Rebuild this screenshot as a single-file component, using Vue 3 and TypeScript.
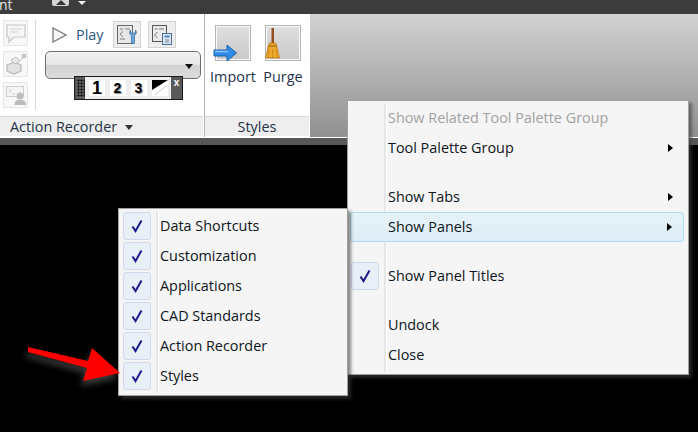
<script setup lang="ts">
type MenuRow = { label?: string; gap?: boolean; disabled?: boolean; more?: boolean; active?: boolean; checked?: boolean }

const panelMenu: MenuRow[] = [
  { label: 'Show Related Tool Palette Group', disabled: true },
  { label: 'Tool Palette Group', more: true },
  { gap: true },
  { label: 'Show Tabs', more: true },
  { label: 'Show Panels', more: true, active: true },
  { gap: true },
  { label: 'Show Panel Titles', checked: true },
  { gap: true },
  { label: 'Undock' },
  { label: 'Close' }
]

const subMenu: string[] = ['Data Shortcuts', 'Customization', 'Applications', 'CAD Standards', 'Action Recorder', 'Styles']
</script>

<template>
  <div class="screen">
    <div class="topbar">
      <span class="topbar-text">nt</span>
      <span class="topbar-btn"><i class="up"></i></span>
      <i class="topbar-caret"></i>
    </div>

    <div class="ribbon">
      <section class="panel action-panel">
        <div class="panel-body action-body">
          <div class="side-icons">
            <button class="tool">
              <svg width="22" height="22" viewBox="0 0 22 22"><path d="M2 3h18v12H9l-5 5v-5H2z" fill="#f6f6f6" stroke="#c6c6c6" stroke-width="1.200"/><path d="M5 7h12M5 10h8" stroke="#d2d2d2" stroke-width="1.200"/></svg>
            </button>
            <button class="tool">
              <svg width="22" height="22" viewBox="0 0 22 22"><path d="M2 12l8-3 6 3v6l-7 3-7-3z" fill="#e2e2e2" stroke="#b8b8b8" stroke-width="1.200"/><path d="M6 7l5-3 4 4-5 3z" fill="#e8e8e8" stroke="#bdbdbd"/><path d="M15 7l4-3" stroke="#c4c4c4"/><rect x="17.500" y="1.500" width="3" height="3" fill="#cfcfcf" stroke="#bdbdbd"/></svg>
            </button>
            <button class="tool">
              <svg width="22" height="22" viewBox="0 0 22 22"><rect x="1.500" y="2.500" width="17" height="10" fill="#f5f5f5" stroke="#cecece"/><path d="M4 5.500l2 1.500-2 1.500M7 10h3" stroke="#cfcfcf" fill="none"/><circle cx="15" cy="12" r="3.500" fill="#bcbcbc"/><path d="M9.500 21c0-4 1.500-5 5.500-5s6 1 6 5z" fill="#bcbcbc"/></svg>
            </button>
          </div>
          <div class="recorder">
            <div class="recorder-top">
              <svg class="play" width="16" height="16" viewBox="0 0 16 16"><path d="M2 1v14l13-7z" fill="#f7f7f7" stroke="#77797b" stroke-width="1.300"/></svg>
              <span class="play-text">Play</span>
              <button class="tool framed">
                <svg width="22" height="22" viewBox="0 0 22 22"><rect x="1.500" y="1.500" width="15" height="18" fill="#e4e6e8" stroke="#6a6a6a"/><path d="M4 5h3M9 5h5M4 10l3-2.500M4 10l3 3M4 15h5" stroke="#808080" fill="none"/><path d="M14.500 6c-1.500 2-1 4.500 1 5.500v8h3v-8c2-1 2.500-3.500 1-5.500v3h-5z" fill="#6ea6d8" stroke="#33689c" stroke-width=".7"/></svg>
              </button>
              <button class="tool framed">
                <svg width="22" height="22" viewBox="0 0 22 22"><rect x="1.500" y="1.500" width="14" height="16" fill="#e8eaec" stroke="#555"/><path d="M3.500 5h3M8 5h5M3.500 11l3-3M3.500 11l3 3" stroke="#777" fill="none"/><rect x="11.500" y="9.500" width="9" height="11" fill="#dbe6f1" stroke="#496f96"/><path d="M13.500 12.500h5" stroke="#4a86c2" stroke-width="2"/><path d="M14 16h4M14 18h4" stroke="#7a8896"/></svg>
              </button>
            </div>
            <div class="combo"><i class="combo-caret"></i></div>
          </div>
        </div>
        <footer class="panel-foot action-foot">Action Recorder <i class="foot-caret"></i></footer>
      </section>

      <section class="panel styles-panel">
        <div class="panel-body styles-body">
          <div class="big-tool">
            <span class="big-box">
              <svg class="import-arrow" width="25" height="18" viewBox="0 0 25 18"><path d="M1 6h13V1l9.500 8L14 17v-5H1z" fill="#2f8be6" stroke="#1762ac"/><path d="M2 7.500h13" stroke="#8cc8fb" stroke-width="1.500"/></svg>
            </span>
            <span>Import</span>
          </div>
          <div class="big-tool">
            <span class="big-box">
              <svg class="broom" width="15" height="31" viewBox="0 0 15 31"><path d="M6.500 0h2.500v17H6.500z" fill="#94501f"/><path d="M4.500 15h6.500l1 4 2.500 11H0.500L3 19z" fill="#eda92c" stroke="#b87712" stroke-width=".7"/><path d="M4 21l-1 9M7.500 21v9M11 21l1.500 9" stroke="#b87712" stroke-width=".6"/><path d="M3.500 18h8" stroke="#8a5a10"/></svg>
            </span>
            <span>Purge</span>
          </div>
        </div>
        <footer class="panel-foot">Styles</footer>
      </section>

      <div class="ribbon-rest"></div>
    </div>
    <div class="ribbon-strip"></div>

    <div class="float-bar">
      <span class="grip"></span>
      <span class="views">
        <b class="v1">1</b>
        <b>2</b>
        <b>3</b>
        <svg width="16" height="16" viewBox="0 0 16 16"><rect width="16" height="16" fill="#fff"/><path d="M0 0h16L0 10z" fill="#000"/><path d="M3 15L15 5" stroke="#ccc"/></svg>
      </span>
      <span class="float-x">x</span>
    </div>

    <div class="menu panel-menu">
      <template v-for="(row, i) in panelMenu" :key="i">
        <div v-if="row.gap" class="menu-gap"></div>
        <div v-else class="menu-row" :class="{ disabled: row.disabled, active: row.active }">
          <span class="check-cell">
            <span v-if="row.checked" class="check">
              <svg width="14" height="14" viewBox="0 0 14 14"><path d="M2.500 7.500l3 4.500L11.500 1.500" fill="none" stroke="#1c1c8c" stroke-width="2"/></svg>
            </span>
          </span>
          <span class="menu-label">{{ row.label }}</span>
          <i v-if="row.more" class="more"></i>
        </div>
      </template>
    </div>

    <div class="menu sub-menu">
      <div v-for="name in subMenu" :key="name" class="menu-row">
        <span class="check-cell">
          <span class="check">
            <svg width="14" height="14" viewBox="0 0 14 14"><path d="M2.500 7.500l3 4.500L11.500 1.500" fill="none" stroke="#1c1c8c" stroke-width="2"/></svg>
          </span>
        </span>
        <span class="menu-label">{{ name }}</span>
      </div>
    </div>

    <svg class="red-arrow" width="100" height="50" viewBox="0 0 100 50">
      <path d="M1 3v5l59 16-4 13 37-8-28-25-4 13z" fill="#fe0000"/>
    </svg>
  </div>
</template>

<style scoped>
.screen {
  position: relative;
  width: 698px;
  height: 432px;
  overflow: hidden;
  background: #000;
  font-family: "Open Sans", "Noto Sans", sans-serif;
  font-size: 14.4px;
  color: #0c1420;
}

.topbar {
  height: 14px;
  background: #3c3c3c;
  display: flex;
  align-items: flex-start;
  overflow: hidden;
}
.topbar-text {
  color: #e8e8e8;
  font-size: 14px;
  line-height: 10px;
  margin-left: -1px;
  width: 53px;
}
.topbar-btn {
  width: 17px;
  height: 6px;
  background: #d4d4d4;
  border-radius: 0 0 2px 2px;
  display: flex;
  justify-content: center;
}
.up {
  width: 0;
  height: 0;
  border: 5px solid transparent;
  border-top: 0;
  border-bottom: 5px solid #333;
}
.topbar-caret {
  width: 0;
  height: 0;
  margin: 1px 0 0 9px;
  border: 4px solid transparent;
  border-bottom: 0;
  border-top: 4px solid #eee;
}

.ribbon {
  height: 123px;
  display: flex;
  background: #fff;
}
.panel {
  display: flex;
  flex-direction: column;
  background: #fff;
  border-right: 1px solid #b4b4b4;
}
.action-panel { width: 204px; }
.styles-panel { width: 105px; border-right: 0; }
.panel-body { flex: 1; }
.panel-foot {
  height: 20px;
  margin: 0 1px 1px 0;
  padding-top: 1px;
  background: #eeeeee;
  border-top: 1px solid #d9d9d9;
  box-sizing: border-box;
  color: #243247;
  font-size: 14.4px;
  line-height: 18px;
  text-align: center;
}
.action-foot {
  padding-left: 10px;
  text-align: left;
}
.foot-caret {
  display: inline-block;
  width: 0;
  height: 0;
  margin-left: 4px;
  vertical-align: 2px;
  border: 4.500px solid transparent;
  border-bottom: 0;
  border-top: 5px solid #333;
}

.action-body {
  display: flex;
  padding-top: 6px;
}
.side-icons {
  width: 36px;
  height: 90px;
  box-sizing: border-box;
  padding-left: 3px;
  border-right: 1px solid #d6d6d6;
  display: flex;
  flex-direction: column;
  gap: 5px;
}
.tool {
  width: 25px;
  height: 26px;
  padding: 0;
  border: 1px solid #e6e6e6;
  background: #f8f8f8;
  display: flex;
  align-items: center;
  justify-content: center;
}
.recorder {
  margin-left: 9px;
  width: 156px;
}
.recorder-top {
  height: 31px;
  display: flex;
  align-items: center;
  margin-top: -1px;
}
.play { margin-left: 6px; }
.play-text {
  width: 37px;
  margin-left: 9px;
  color: #2b5584;
  font-size: 14.4px;
}
.framed {
  width: 28px;
  height: 27px;
  margin-right: 7px;
  border-color: #d4d4d4;
  background: #eeeeee;
}
.combo {
  height: 28px;
  margin-top: 1px;
  box-sizing: border-box;
  position: relative;
  border: 1px solid #6f6f6f;
  border-radius: 5px;
  background: linear-gradient(#f2f2f2 0%, #e6e6e6 48%, #d2d2d2 50%, #dcdcdc 100%);
}
.combo-caret {
  position: absolute;
  right: 7px;
  top: 12px;
  width: 0;
  height: 0;
  border: 4.500px solid transparent;
  border-bottom: 0;
  border-top: 5px solid #111;
}

.styles-body {
  display: flex;
  padding: 11px 0 0 7px;
  gap: 8px;
  color: #243247;
}
.big-tool {
  width: 42px;
  display: flex;
  flex-direction: column;
  align-items: center;
  gap: 6px;
  font-size: 14.4px;
  line-height: 20px;
}
.big-box {
  position: relative;
  width: 36px;
  height: 36px;
  box-sizing: border-box;
  border: 2px solid #fafafa;
  outline: 1px solid #b4b4b4;
  outline-offset: -1px;
  background: linear-gradient(#dfdfdf, #c9c9c9);
}
.import-arrow { position: absolute; left: -4px; top: 17px; }
.broom { position: absolute; left: -2px; top: 1px; }

.ribbon-rest {
  flex: 1;
  background: linear-gradient(#d2d2d2, #909090);
}
.ribbon-strip {
  height: 8px;
  box-sizing: border-box;
  border-top: 1px solid #fff;
  background: #585858;
}

.float-bar {
  position: absolute;
  left: 74px;
  top: 76px;
  width: 109px;
  height: 24px;
  box-sizing: border-box;
  display: flex;
  border: 1px solid #1a1a1a;
  background: #5a5a5a;
}
.grip {
  width: 8px;
  margin: 2px 0 2px 2px;
  background: radial-gradient(#111 45%, transparent 50%) 0 0 / 3px 3px;
}
.views {
  flex: 1;
  display: flex;
  align-items: center;
  justify-content: space-around;
  padding: 0 1px;
  background: #eeeeee;
}
.views b {
  width: 16px;
  background: #fff;
  color: #000;
  font-family: "Liberation Sans", sans-serif;
  font-size: 14px;
  line-height: 16px;
  text-align: center;
  text-shadow: 1px 1px 1px #8a8a8a;
}
.views .v1 { font-size: 18px; font-weight: 400; text-shadow: 1px 0 0 #000; }
.float-x {
  width: 11px;
  color: #fff;
  font-family: "Liberation Sans", sans-serif;
  font-size: 10px;
  font-weight: 700;
  line-height: 11px;
  text-align: center;
}

.menu {
  position: absolute;
  box-sizing: border-box;
  border: 1px solid #a0a0a0;
  background: #f5f5f5;
  box-shadow: 3px 3px 3px rgba(60, 60, 60, 0.6);
}
.menu::before {
  content: "";
  position: absolute;
  top: 2px;
  bottom: 2px;
  width: 2px;
  background: #e6e6e6;
  border-right: 1px solid #fff;
}
.panel-menu {
  left: 347px;
  top: 100px;
  width: 342px;
  height: 275px;
  padding: 2px 4px 0 2px;
}
.panel-menu::before { left: 36px; }
.sub-menu {
  left: 118px;
  top: 208px;
  width: 230px;
  height: 188px;
  padding: 2px 4px 0 3px;
}
.sub-menu::before { left: 37px; }
.menu-row {
  position: relative;
  height: 30px;
  box-sizing: border-box;
  display: flex;
  align-items: center;
  color: #0c1420;
}
.menu-gap { height: 19px; }
.check-cell {
  width: 38px;
  display: flex;
  align-items: center;
  padding-left: 1px;
}
.menu-label {
  flex: 1;
  margin: 0 0 2px -1px;
}
.disabled { color: #a2a2a2; }
.active {
  border: 1px solid #aedcf5;
  border-radius: 3px;
  background: linear-gradient(#e6f2f8, #dcedf6);
}
.active .check-cell { width: 37px; }
.check {
  width: 28px;
  height: 28px;
  box-sizing: border-box;
  display: flex;
  align-items: center;
  justify-content: center;
  border: 1px solid #cfd8ec;
  border-radius: 3px;
  background: #e8eff7;
}
.more {
  width: 0;
  height: 0;
  margin-right: 11px;
  border: 4px solid transparent;
  border-right: 0;
  border-left: 5px solid #000;
}

.red-arrow {
  position: absolute;
  left: 27px;
  top: 344px;
  filter: drop-shadow(-2px 5px 3px rgba(120, 120, 120, 0.5));
}
</style>
